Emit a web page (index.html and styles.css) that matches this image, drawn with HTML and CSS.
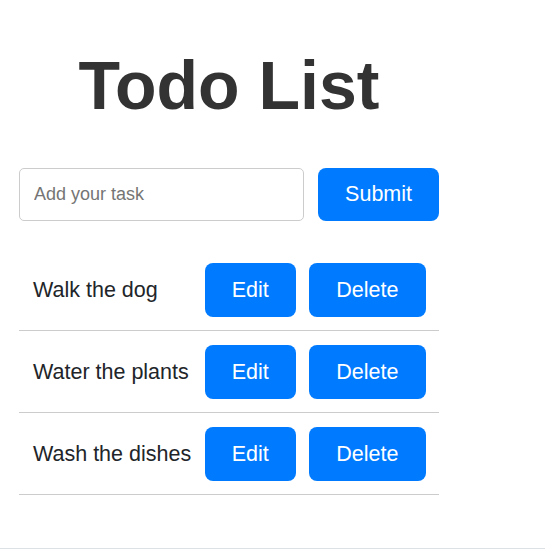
FILE: index.html
```html
<!DOCTYPE html>
<html lang="en">
<head>
<meta charset="UTF-8" />
<meta name="viewport" content="width=device-width, initial-scale=1.0" />
<title>Todo List</title>
<link rel="stylesheet" href="styles.css">
</head>
<body>

<div class="page">
  <div class="todo-container">
    <h1>Todo List</h1>

    <form class="todo-form" onsubmit="return false;">
      <input type="text" placeholder="Add your task" />
      <button type="submit">Submit</button>
    </form>

    <ul class="todo-list">
      <li class="todo-item">
        <span class="todo-text">Walk the dog</span>
        <button>Edit</button>
        <button>Delete</button>
      </li>
      <li class="todo-item">
        <span class="todo-text">Water the plants</span>
        <button>Edit</button>
        <button>Delete</button>
      </li>
      <li class="todo-item">
        <span class="todo-text">Wash the dishes</span>
        <button>Edit</button>
        <button>Delete</button>
      </li>
    </ul>
  </div>
</div>

</body>
</html>
```

FILE: styles.css
```css
body {
  margin: 0;
  font-family: "Liberation Sans", Arial, sans-serif;
  background: #fff;
}

.page {
  min-height: 100vh;
  box-sizing: border-box;
  border-bottom: 1px solid #dde1e6;
}

.todo-container {
  width: 420px;
  margin-left: 19px;
  padding-top: 49px;
}

h1 {
  margin: 0 0 47px 0;
  text-align: center;
  font-size: 68px;
  line-height: 72px;
  color: #333;
}

.todo-form {
  display: flex;
  gap: 14px;
}

.todo-form input {
  flex: 1;
  min-width: 0;
  height: 53px;
  box-sizing: border-box;
  padding: 0 14px;
  border: 1px solid #ccc;
  border-radius: 5px;
  font-family: inherit;
  font-size: 18px;
  color: #333;
}

.todo-form input::placeholder {
  color: #757575;
}

button {
  padding: 15px 27px;
  border: none;
  border-radius: 8px;
  background-color: #007bff;
  color: #fff;
  font-family: inherit;
  font-size: 21.5px;
  line-height: 23px;
  cursor: pointer;
}

button:hover {
  background-color: #0069d9;
}

.todo-list {
  list-style: none;
  margin: 28px 0 0 0;
  padding: 0;
}

.todo-item {
  display: flex;
  align-items: center;
  gap: 13px;
  padding: 14px 13px 13px 14px;
  border-bottom: 1px solid #ccc;
}

.todo-item button {
  line-height: 24px;
}

.todo-item button:last-child {
  padding: 15px 27.5px;
}

.todo-text {
  flex: 1;
  font-size: 21.5px;
  color: #212529;
}
```
